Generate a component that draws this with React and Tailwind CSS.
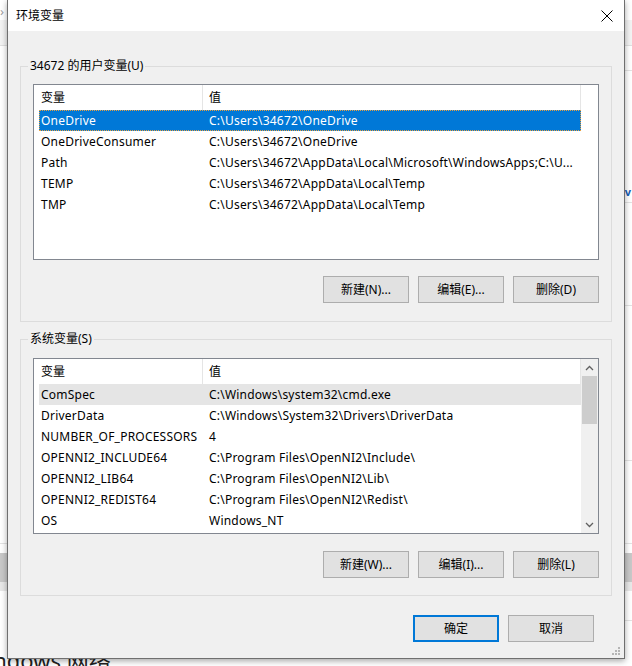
import React from 'react';

const userVars = [
  ['OneDrive', 'C:\\Users\\34672\\OneDrive'],
  ['OneDriveConsumer', 'C:\\Users\\34672\\OneDrive'],
  ['Path', 'C:\\Users\\34672\\AppData\\Local\\Microsoft\\WindowsApps;C:\\U...'],
  ['TEMP', 'C:\\Users\\34672\\AppData\\Local\\Temp'],
  ['TMP', 'C:\\Users\\34672\\AppData\\Local\\Temp'],
];

const sysVars = [
  ['ComSpec', 'C:\\Windows\\system32\\cmd.exe'],
  ['DriverData', 'C:\\Windows\\System32\\Drivers\\DriverData'],
  ['NUMBER_OF_PROCESSORS', '4'],
  ['OPENNI2_INCLUDE64', 'C:\\Program Files\\OpenNI2\\Include\\'],
  ['OPENNI2_LIB64', 'C:\\Program Files\\OpenNI2\\Lib\\'],
  ['OPENNI2_REDIST64', 'C:\\Program Files\\OpenNI2\\Redist\\'],
  ['OS', 'Windows_NT'],
];

const WinButton = ({ children, primary }) => (
  <button
    className={`h-[27px] w-[86px] bg-[#e1e1e1] text-[12px] leading-none text-black ${
      primary ? 'border-2 border-[#0078d7]' : 'border border-[#adadad]'
    }`}
  >
    {children}
  </button>
);

const Chevron = ({ up }) => (
  <svg width="9" height="6" viewBox="0 0 9 6">
    <path
      d={up ? 'M1 5 L4.5 1.5 L8 5' : 'M1 1 L4.5 4.5 L8 1'}
      fill="none"
      stroke="#606060"
      strokeWidth="1.3"
    />
  </svg>
);

const ScrollBar = () => (
  <div className="w-[17px] bg-[#f0f0f0] flex flex-col">
    <div className="h-[17px] flex items-center justify-center">
      <Chevron up />
    </div>
    <div className="flex-1 px-[1px]">
      <div className="h-[48px] bg-[#cdcdcd]" />
    </div>
    <div className="h-[17px] flex items-center justify-center">
      <Chevron />
    </div>
  </div>
);

const ListView = ({ rows, selected, inactive, scroll }) => (
  <div className="h-[176px] border border-[#828790] bg-white flex">
    <div className="flex-1 pl-[5px] overflow-hidden">
      {/* header */}
      <div className="flex h-[25px] w-[542px]">
        <div className="w-[164px] pl-[2px] flex items-center border-r border-[#e5e5e5]">变量</div>
        <div className="flex-1 pl-[6px] flex items-center border-r border-[#e5e5e5]">值</div>
      </div>
      {rows.map(([name, value], i) => {
        let rowCls = '';
        if (i === selected) rowCls = 'bg-[#0078d7] text-white outline outline-1 outline-dotted outline-[#e8a040] -outline-offset-1';
        if (i === inactive) rowCls = 'bg-[#e5e5e5]';
        return (
          <div key={name} className={`flex h-[21px] w-[542px] items-center whitespace-nowrap tracking-[0.22px] ${rowCls}`}>
            <div className="w-[164px] pl-[2px] overflow-hidden">{name}</div>
            <div className="flex-1 pl-[6px] overflow-hidden">{value}</div>
          </div>
        );
      })}
    </div>
    {scroll ? <ScrollBar /> : <div className="w-[17px]" />}
  </div>
);

const Group = ({ label, children, className = '' }) => (
  <fieldset className={`mx-[12px] border border-[#dcdcdc] ${className}`}>
    <legend className="ml-[7px] px-[2px] h-[16px] leading-[16px]">{label}</legend>
    <div className="px-[12px]">{children}</div>
  </fieldset>
);

export default function App() {
  return (
    <div
      className="relative w-[632px] h-[666px] bg-white overflow-hidden text-[12px] text-black"
      style={{ fontFamily: '"Noto Sans", "Noto Sans CJK SC", sans-serif' }}
    >
      {/* desktop window behind the dialog */}
      <div className="absolute left-0 top-[2px] text-[#a0a0a0] text-[13px]">›</div>
      <div className="absolute left-0 top-[20px] w-full h-[26px] bg-[#f3f3f3] border-b border-[#e0e0e0]" />
      <div className="absolute left-0 top-[543px] w-full h-[1px] bg-[#e3e3e3]" />
      <div className="absolute left-0 top-[553px] w-full h-[29px] bg-[#c8c8c8]" />
      <div className="absolute left-0 top-[582px] w-full h-[9px] bg-[#e8e8e8]" />
      <div className="absolute right-0 top-[70px] w-[8px] h-[1px] bg-[#e3e3e3]" />
      <div className="absolute right-0 top-[202px] w-[8px] h-[1px] bg-[#e3e3e3]" />
      <div className="absolute right-0 top-[305px] w-[8px] h-[1px] bg-[#e3e3e3]" />
      <div className="absolute right-0 top-[460px] w-[8px] h-[1px] bg-[#e3e3e3]" />
      <div className="absolute right-0 top-[620px] w-[8px] h-[1px] bg-[#e3e3e3]" />
      <div className="absolute right-[1px] top-[184px] text-[#1a5fb4] text-[11px] font-bold">v</div>
      <div className="absolute left-[-33px] top-[644px] text-[22px] text-[#222] whitespace-nowrap">Windows 网络</div>

      {/* dialog */}
      <div className="absolute left-[7px] top-0 w-[618px] h-[659px] flex flex-col border-x border-b border-[#6f6f6f] shadow-[0_2px_6px_rgba(0,0,0,0.35)] bg-[#f0f0f0]">
        <div className="h-[31px] bg-white flex items-center justify-between pl-[8px] pr-[11px]">
          <span>环境变量</span>
          <svg width="12" height="12" viewBox="0 0 12 12">
            <path d="M0.5 0.5 L11.5 11.5 M11.5 0.5 L0.5 11.5" stroke="#000" strokeWidth="1" />
          </svg>
        </div>

        <div className="flex-1 flex flex-col pt-[27px] relative">
          <Group label="34672 的用户变量(U)" className="pb-[18px]">
            <div className="mt-[10px]">
              <ListView rows={userVars} selected={0} />
            </div>
            <div className="mt-[16px] flex justify-end gap-[9px]">
              <WinButton>新建(N)...</WinButton>
              <WinButton>编辑(E)...</WinButton>
              <WinButton>删除(D)</WinButton>
            </div>
          </Group>

          <Group label="系统变量(S)" className="mt-[9px] pb-[17px]">
            <div className="mt-[11px]">
              <ListView rows={sysVars} inactive={0} scroll />
            </div>
            <div className="mt-[17px] flex justify-end gap-[9px]">
              <WinButton>新建(W)...</WinButton>
              <WinButton>编辑(I)...</WinButton>
              <WinButton>删除(L)</WinButton>
            </div>
          </Group>

          <div className="mt-[19px] mr-[30px] flex justify-end gap-[9px]">
            <WinButton primary>确定</WinButton>
            <WinButton>取消</WinButton>
          </div>

          {/* size grip */}
          <svg className="absolute right-[3px] bottom-[2px]" width="10" height="10" viewBox="0 0 10 10">
            <rect x="7" y="1" width="2" height="2" fill="#b5b5b5" />
            <rect x="4" y="4" width="2" height="2" fill="#b5b5b5" />
            <rect x="7" y="4" width="2" height="2" fill="#b5b5b5" />
            <rect x="1" y="7" width="2" height="2" fill="#b5b5b5" />
            <rect x="4" y="7" width="2" height="2" fill="#b5b5b5" />
            <rect x="7" y="7" width="2" height="2" fill="#b5b5b5" />
          </svg>
        </div>
      </div>
    </div>
  );
}
